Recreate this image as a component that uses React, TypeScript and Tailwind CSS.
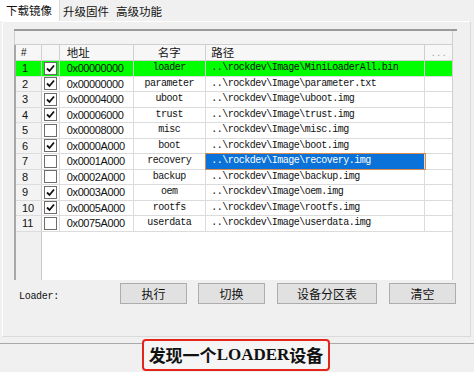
import React from 'react';

const CJK = { fontFamily: '"Noto Sans CJK SC", "Liberation Sans", sans-serif' };
const MONO = { fontFamily: '"Liberation Mono", "Noto Sans CJK SC", monospace' };
const SANS = { fontFamily: '"Liberation Sans", "Noto Sans CJK SC", sans-serif' };

type Row = { n: number; on: boolean; addr: string; name: string; file: string };

const ROWS: Row[] = [
  { n: 1, on: true, addr: '0x00000000', name: 'loader', file: 'MiniLoaderAll.bin' },
  { n: 2, on: true, addr: '0x00000000', name: 'parameter', file: 'parameter.txt' },
  { n: 3, on: true, addr: '0x00004000', name: 'uboot', file: 'uboot.img' },
  { n: 4, on: true, addr: '0x00006000', name: 'trust', file: 'trust.img' },
  { n: 5, on: false, addr: '0x00008000', name: 'misc', file: 'misc.img' },
  { n: 6, on: true, addr: '0x0000A000', name: 'boot', file: 'boot.img' },
  { n: 7, on: false, addr: '0x0001A000', name: 'recovery', file: 'recovery.img' },
  { n: 8, on: false, addr: '0x0002A000', name: 'backup', file: 'backup.img' },
  { n: 9, on: true, addr: '0x0003A000', name: 'oem', file: 'oem.img' },
  { n: 10, on: true, addr: '0x0005A000', name: 'rootfs', file: 'rootfs.img' },
  { n: 11, on: false, addr: '0x0075A000', name: 'userdata', file: 'userdata.img' },
];

const Check: React.FC<{ on: boolean }> = ({ on }) => (
  <div className="w-[13px] h-[13px] border border-[#6d6d6d] bg-white flex items-center justify-center">
    {on && (
      <svg width="9" height="9" viewBox="0 0 9 9">
        <path d="M1 4.5 L3.5 7 L8 1.5" fill="none" stroke="#111" strokeWidth="1.8" />
      </svg>
    )}
  </div>
);

const DataRow: React.FC<{ r: Row }> = ({ r }) => {
  const green = r.n === 1;
  const sel = r.n === 7;
  const bg = green ? 'bg-[#00ff00]' : 'bg-white';
  return (
    <div className={`flex h-[15.5px] border-b border-[#dcdcdc] text-[11px] leading-[14px] text-[#111] ${bg}`}>
      <div className={`w-[26px] pl-[6px] border-r border-[#c8c8c8] ${green ? '' : 'bg-[#f3f3f3]'}`} style={SANS}>
        {r.n}
      </div>
      <div className="w-[18px] flex items-center justify-center border-r border-[#dcdcdc]">
        <Check on={r.on} />
      </div>
      <div className="w-[74px] pl-[7px] border-r border-[#dcdcdc] tracking-[-0.4px]" style={SANS}>
        {r.addr}
      </div>
      <div className="w-[73px] text-center border-r border-[#dcdcdc] text-[10px] tracking-[-0.5px]" style={MONO}>
        {r.name}
      </div>
      <div
        className={`w-[220px] pl-[5px] border-r border-[#dcdcdc] text-[10px] tracking-[-0.5px] ${
          sel ? 'bg-[#0a72d8] text-white outline outline-1 outline-[#d98a4a]' : ''
        }`}
        style={MONO}
      >
        {'..\\rockdev\\Image\\' + r.file}
      </div>
      <div className="w-[27px]" />
    </div>
  );
};

const Btn: React.FC<{ w: string; label: string }> = ({ w, label }) => (
  <div
    className={`${w} h-[21px] bg-[#e1e1e1] border border-[#adadad] flex items-center justify-center text-[12px] text-[#111]`}
    style={CJK}
  >
    {label}
  </div>
);

export default function App() {
  return (
    <div className="w-[474px] h-[372px] bg-[#f0f0f0] overflow-hidden flex flex-col select-none">
      {/* tabs */}
      <div className="h-[21px] flex items-end text-[11.5px] text-[#111]" style={CJK}>
        <div className="h-[21px] w-[60px] bg-white border-r border-[#d9d9d9] flex items-center pl-[6px]">下载镜像</div>
        <div className="h-[19px] flex items-center pl-[3px] pr-[5px]">升级固件</div>
        <div className="h-[19px] flex items-center pl-[2px]">高级功能</div>
      </div>

      {/* panel */}
      <div className="h-[316px] mx-[2px] w-[469px] border border-white border-r-[#dadada] border-b-[#dadada] bg-[#f0f0f0] flex flex-col pt-[7px] pl-[11px]">
        {/* table */}
        <div className="w-[445px] h-[251px] flex flex-col">
          <div className="h-[2px] w-[443px] bg-[#9a9a9a]" />
          <div className="h-[14px] w-[439px] border border-t-0 border-[#cfcfcf] bg-[#f3f3f3]" />
          <div className="w-[439px] flex-1 border-l-2 border-[#a8a8a8] border-r border-r-[#cfcfcf] bg-white flex flex-col">
            <div className="flex h-[16px] border-b border-[#d0d0d0] bg-[#f7f7f7] text-[11.5px] leading-[15px] text-[#111]" style={CJK}>
              <div className="w-[26px] pl-[5px] border-r border-[#d0d0d0] text-[10px]" style={SANS}>#</div>
              <div className="w-[18px] border-r border-[#d0d0d0]" />
              <div className="w-[74px] pl-[7px] border-r border-[#d0d0d0]">地址</div>
              <div className="w-[73px] text-center border-r border-[#d0d0d0]">名字</div>
              <div className="w-[220px] pl-[5px] border-r border-[#d0d0d0]">路径</div>
              <div className="w-[27px] text-center text-[#9a9a9a] text-[10px]" style={SANS}>. . .</div>
            </div>
            {ROWS.map((r) => (
              <DataRow key={r.n} r={r} />
            ))}
            <div className="flex flex-1">
              <div className="w-[26px] bg-[#f0f0f0] border-r border-[#c8c8c8]" />
              <div className="flex-1 bg-white" />
            </div>
          </div>
        </div>

        {/* buttons */}
        <div className="flex items-center mt-[3px] h-[21px]">
          <div className="w-[106px] pl-[5px] pt-[5px] text-[10px] tracking-[-0.3px] text-[#111]" style={MONO}>Loader:</div>
          <Btn w="w-[67px]" label="执行" />
          <div className="w-[11px]" />
          <Btn w="w-[67px]" label="切换" />
          <div className="w-[12px]" />
          <Btn w="w-[100px]" label="设备分区表" />
          <div className="w-[12px]" />
          <Btn w="w-[67px]" label="清空" />
        </div>
      </div>

      {/* status */}
      <div className="h-[6px]" />
      <div className="flex-1 border-t border-[#a9a9a9] flex justify-center">
        <div className="-mt-[5px] h-[32px] w-[188px] ml-[-2px] border-2 border-[#e5241c] rounded-[4px] bg-[#f5f5f5] flex items-center justify-center whitespace-nowrap text-[17px] leading-[20px] font-bold text-[#111]">
          <span style={{ fontFamily: '"Noto Sans CJK SC", serif' }}>发现一个</span>
          <span style={{ fontFamily: '"Liberation Serif", serif' }}>LOADER</span>
          <span style={{ fontFamily: '"Noto Sans CJK SC", serif' }}>设备</span>
        </div>
      </div>
    </div>
  );
}
